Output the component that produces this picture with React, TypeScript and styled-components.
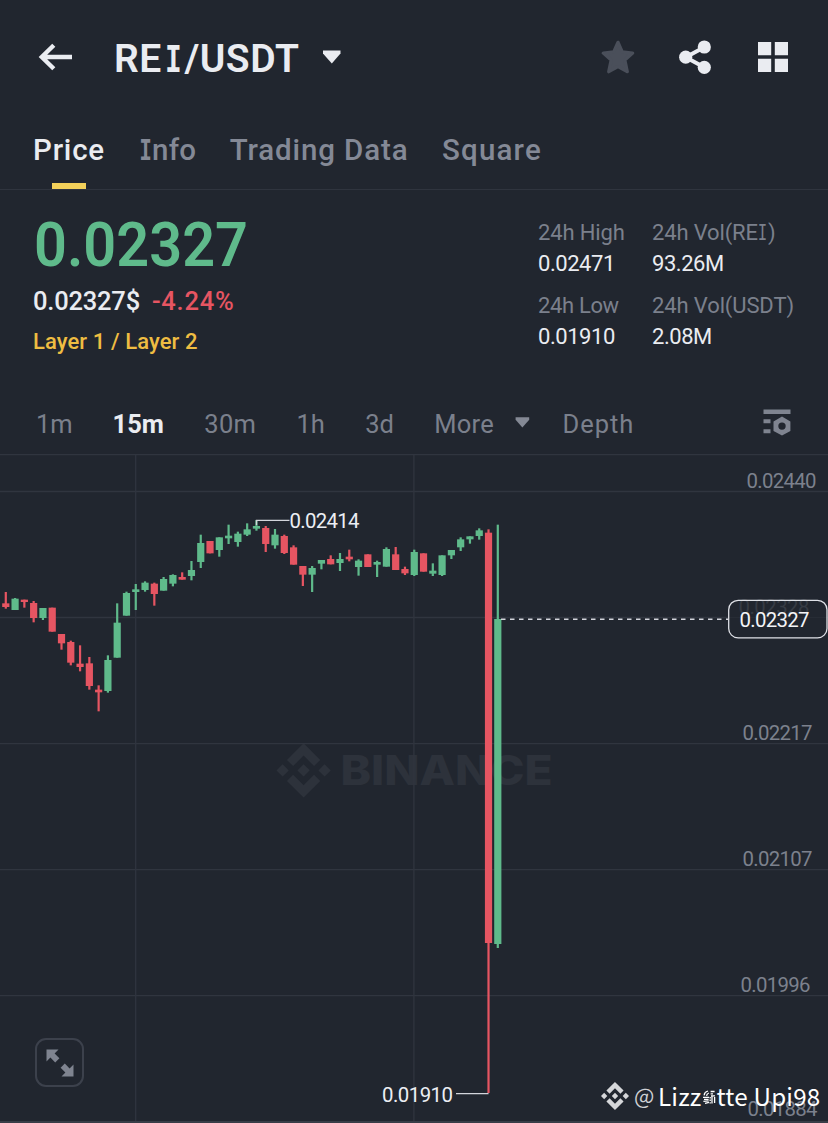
import React from 'react';
import styled, { createGlobalStyle } from 'styled-components';

const c = {
  bg: '#21262f',
  line: '#2f343e',
  text: '#eaecf1',
  muted: '#848996',
  dim: '#7b808c',
  green: '#5fba8b',
  red: '#e65562',
  yellow: '#f3d05a',
  gold: '#efbd42',
};

const GlobalStyle = createGlobalStyle`
  * { box-sizing: border-box; }
  body { margin: 0; background: ${c.bg}; }
`;

const Screen = styled.main`
  width: 828px;
  height: 1123px;
  display: flex;
  flex-direction: column;
  overflow: hidden;
  background: ${c.bg};
  color: ${c.text};
  font-family: Roboto, sans-serif;
  white-space: nowrap;
`;

const Header = styled.header`
  display: flex;
  align-items: center;
  height: 117px;
  padding: 0 40px 0 38px;
`;

const BackIcon = styled.svg`
  margin-top: -4px;
`;

const Title = styled.h1`
  margin: 0 0 0 41px;
  font-size: 39px;
  font-weight: 600;
  line-height: 46px;
  letter-spacing: 0.5px;
`;

const SlabBox = styled.span<{ $w: number }>`
  display: inline-flex;
  justify-content: center;
  width: ${(p) => p.$w}em;
  letter-spacing: 0;
`;

const SlabGlyph = styled.span<{ $weight: number }>`
  font-family: 'DejaVu Sans Mono', monospace;
  font-size: 0.965em;
  font-weight: ${(p) => p.$weight};
  line-height: 1;
  transform: scaleX(0.74);
`;

const SlabI = ({ w, weight = 700 }: { w: number; weight?: number }) => (
  <SlabBox $w={w}>
    <SlabGlyph $weight={weight}>I</SlabGlyph>
  </SlabBox>
);

const TitleCaret = styled.svg`
  margin: -4px 0 0 23px;
`;

const Actions = styled.div`
  display: flex;
  align-items: center;
  margin: -4px 0 0 auto;
`;

const ShareIcon = styled.svg`
  margin: 1px 46px 0 44px;
`;

const GridIcon = styled.svg`
  margin-top: 1px;
`;

const Tabs = styled.nav`
  display: flex;
  gap: 33.5px;
  height: 73px;
  padding: 15px 0 0 33px;
  border-bottom: 1px solid ${c.line};
`;

const Tab = styled.a<{ $active?: boolean; $ls: number }>`
  position: relative;
  height: 57px;
  font-size: 29.5px;
  font-weight: 500;
  line-height: 36px;
  letter-spacing: ${(p) => p.$ls}px;
  color: ${(p) => (p.$active ? c.text : c.muted)};
  ${(p) =>
    p.$active &&
    `&::after {
      content: '';
      position: absolute;
      left: 19px;
      bottom: 0;
      width: 33.5px;
      height: 6px;
      background: ${c.yellow};
    }`}
`;

const Summary = styled.section`
  display: flex;
  justify-content: space-between;
  height: 202px;
  padding: 25px 32px 0 33px;
`;

const LastPrice = styled.div`
  width: 230px;
  font-size: 62px;
  font-weight: 600;
  line-height: 60px;
  color: ${c.green};
  transform: translateX(1px) scaleX(0.93);
  transform-origin: 0 0;
`;

const SubPrice = styled.div`
  display: flex;
  margin-top: 9px;
  font-size: 25.5px;
  font-weight: 500;
  line-height: 34px;
  letter-spacing: -0.2px;
`;

const Change = styled.span`
  margin-left: 12px;
  letter-spacing: 0.75px;
  color: ${c.red};
`;

const Category = styled.div`
  margin-top: 10px;
  font-size: 22px;
  font-weight: 500;
  line-height: 28px;
  letter-spacing: 0.09px;
  color: ${c.gold};
`;

const Stats = styled.dl`
  display: grid;
  grid-template-columns: 114px 144px;
  grid-auto-rows: 62px;
  row-gap: 11px;
  margin: 2px 0 0;
`;

const Stat = styled.div`
  font-size: 22px;
  line-height: 31px;
`;

const StatLabel = styled.dt<{ $ls: number }>`
  color: ${c.dim};
  letter-spacing: ${(p) => p.$ls}px;
`;

const StatValue = styled.dd`
  margin: 0;
  letter-spacing: -0.45px;
`;

const Intervals = styled.nav`
  display: flex;
  align-items: center;
  gap: 40.3px;
  height: 62px;
  padding: 1px 37px 0 36px;
`;

const Interval = styled.a<{ $active?: boolean; $ls?: number; $pull?: number }>`
  display: flex;
  align-items: center;
  margin-left: ${(p) => -(p.$pull ?? 0)}px;
  font-size: 25.5px;
  font-weight: ${(p) => (p.$active ? 700 : 400)};
  line-height: 34px;
  letter-spacing: ${(p) => p.$ls ?? 0}px;
  color: ${(p) => (p.$active ? c.text : c.dim)};
`;

const MoreCaret = styled.svg`
  margin: -3px 0 0 21px;
`;

const SettingsIcon = styled.svg`
  margin: -2px 0 0 auto;
`;

const ChartArea = styled.section`
  position: relative;
  height: 669px;
`;

const ExpandButton = styled.button`
  position: absolute;
  left: 35px;
  top: 584px;
  width: 49px;
  height: 49px;
  padding: 0;
  display: grid;
  place-items: center;
  background: ${c.bg};
  border: 2px solid #3c414c;
  border-radius: 11px;
`;

const Author = styled.div`
  position: absolute;
  left: 601px;
  top: 625px;
  display: flex;
  align-items: center;
  height: 34px;
  font-family: 'Noto Sans CJK SC', sans-serif;
  font-size: 24.2px;
  line-height: 34px;
  color: #fff;
`;

const At = styled.span`
  width: 24px;
  margin: -2px 0 0 5px;
  font-size: 21.5px;
  color: #cfd0d4;
`;

const NameStart = styled.span`
  letter-spacing: 0.2px;
`;

const NameEnd = styled.span`
  letter-spacing: 0.2px;
`;

const BINANCE_PATH =
  'M16.624 13.9202l2.7175 2.7154-7.353 7.353-7.353-7.352 2.7175-2.7164 4.6355 4.6595 4.6356-4.6595zm4.6366-4.6366L24 12l-2.7154 2.7164L18.5682 12l2.6924-2.7164zm-9.272.001l2.7163 2.6914-2.7164 2.7174v-.001L9.2721 12l2.7164-2.7154zm-9.2722-.001L5.4088 12l-2.6914 2.6924L0 12l2.7164-2.7164zM11.9885.0115l7.353 7.329-2.7174 2.7154-4.6356-4.6356-4.6355 4.6595-2.7174-2.7154 7.353-7.353z';

type Candle = ['g' | 'r', number, number, number, number];

// [direction, wick top, body top, body bottom, wick bottom], in thirds of a pixel below CANDLE_TOP
const CANDLE_TOP = 500;
const candles: Candle[] = [
  ['r', 276, 310, 321, 326], ['g', 294, 296, 330, 330], ['r', 299, 299, 306, 323],
  ['r', 303, 309, 354, 367], ['g', 324, 324, 354, 360], ['r', 323, 323, 395, 395],
  ['r', 402, 402, 430, 449], ['r', 422, 426, 488, 496], ['r', 436, 491, 501, 514],
  ['r', 471, 490, 558, 569], ['r', 556, 569, 577, 634], ['g', 466, 480, 573, 578],
  ['g', 310, 368, 473, 473], ['g', 275, 279, 347, 347], ['g', 252, 268, 276, 330],
  ['g', 244, 248, 270, 275], ['r', 248, 251, 282, 317], ['g', 231, 237, 272, 272],
  ['g', 223, 225, 251, 259], ['r', 217, 231, 239, 239], ['g', 183, 210, 228, 241],
  ['g', 104, 129, 186, 204], ['r', 123, 123, 160, 160], ['g', 112, 112, 150, 170],
  ['g', 74, 107, 115, 132], ['g', 95, 101, 126, 140], ['g', 70, 88, 104, 108],
  ['g', 60, 78, 86, 92], ['r', 78, 84, 132, 156], ['g', 87, 104, 136, 146],
  ['r', 104, 108, 159, 162], ['r', 136, 142, 194, 194], ['r', 198, 198, 224, 258],
  ['g', 198, 204, 224, 276], ['g', 180, 180, 191, 208], ['r', 166, 177, 193, 193],
  ['g', 159, 177, 189, 213], ['r', 149, 170, 178, 184], ['g', 178, 182, 201, 227],
  ['r', 163, 163, 201, 201], ['g', 182, 186, 194, 231], ['g', 142, 147, 200, 200],
  ['r', 141, 163, 210, 210], ['r', 200, 207, 220, 225], ['g', 149, 156, 225, 228],
  ['r', 160, 160, 215, 215], ['g', 190, 212, 221, 228], ['g', 166, 166, 225, 228],
  ['g', 150, 150, 166, 177], ['g', 112, 118, 142, 153], ['g', 109, 109, 118, 131],
  ['g', 85, 91, 108, 119], ['r', 88, 98, 1329, 1779], ['g', 74, 357, 1332, 1344],
];

const axis: [string, number, number][] = [
  ['0.02440', 747.5, 488],
  ['0.02217', 743.5, 740],
  ['0.02107', 743.5, 866],
  ['0.01996', 741.5, 992],
  ['0.01884', 748.5, 1116],
];

const Chart = () => (
  <svg width="828" height="669" viewBox="0 454 828 669" fontFamily="Roboto, sans-serif" fontSize="20.4">
    <g fill="#2d323b">
      <path d={BINANCE_PATH} transform="translate(276.5 743.3) scale(2.26)" />
      <text
        x="340.5"
        y="785.3"
        fontSize="40.8"
        fontWeight="800"
        fontFamily="Inter, sans-serif"
        textLength="212"
        lengthAdjust="spacingAndGlyphs"
      >
        BINANCE
      </text>
    </g>
    <g stroke="#30353f" strokeWidth="1.3">
      {[454.7, 491.5, 617.5, 743.7, 869.7, 995.7].map((y) => (
        <path key={y} d={`M0 ${y}H828`} />
      ))}
      <path d="M135.7 455V1122M413.9 455V1122" />
    </g>
    <path d="M0 1122H828" stroke="#383d47" strokeWidth="2" />
    {candles.map(([dir, wickTop, top, bottom, wickBottom], i) => {
      const x = 5.8 + i * 9.283;
      const y = (v: number) => CANDLE_TOP + v / 3;
      return (
        <g key={i} fill={dir === 'g' ? c.green : c.red}>
          <rect x={x - 1.1} y={y(wickTop)} width="2.2" height={(wickBottom - wickTop) / 3} />
          <rect x={x - 3.6} y={y(top)} width="7.2" height={(bottom - top) / 3} />
        </g>
      );
    })}
    <g fill="#7c818d">
      {axis.map(([label, x, y]) => (
        <text key={label} x={x - 1} y={y} textLength="70">
          {label}
        </text>
      ))}
    </g>
    <path d="M501 619.3H728" stroke="#d3d5dc" strokeWidth="1.4" strokeDasharray="4.5 4.5" />
    <g stroke="#d3d5dc" strokeWidth="1.3" fill="none">
      <path d="M256.5 525V520.4H289.5" />
      <path d="M456 1093.7H488.5" />
    </g>
    <g fill="#eceef3">
      <text x="289.5" y="528" textLength="70">0.02414</text>
      <text x="382" y="1102" textLength="71">0.01910</text>
    </g>
    <rect x="728.7" y="600.3" width="98.3" height="37.6" rx="9.5" fill={c.bg} />
    <path d="M729 617.5H827" stroke="#272c35" />
    <text x="738.5" y="613.5" fill="#363b44" textLength="71">0.02328</text>
    <rect x="728.7" y="600.3" width="98.3" height="37.6" rx="9.5" fill="none" stroke="#dfe1e7" strokeWidth="1.3" />
    <text x="739.5" y="626.8" fill="#f3f4f7" textLength="70">0.02327</text>
  </svg>
);

export default function App() {
  return (
    <Screen>
      <GlobalStyle />
      <Header>
        <BackIcon width="35" height="30" viewBox="0 0 35 30" fill="none" stroke={c.text} strokeWidth="4.4">
          <path d="M15.8 3.2L3.8 15L15.8 26.8M3.8 15H34" />
        </BackIcon>
        <Title>
          RE
          <SlabI w={0.58} />
          /USDT
        </Title>
        <TitleCaret width="20" height="14" viewBox="0 0 20 14" fill={c.text}>
          <path d="M1 0.5H18.5V3.6L9.8 13.4L1 3.6Z" />
        </TitleCaret>
        <Actions>
          <svg width="34" height="34" viewBox="0 0 34 34" fill="#4a4f5a" stroke="#4a4f5a" strokeWidth="3.4" strokeLinejoin="round">
            <path d="M17 2.4L21.2 12L31.6 13.1L23.8 20.1L26.2 31.6L17 26.6L7.8 31.6L10.2 20.1L2.4 13.1L12.8 12Z" />
          </svg>
          <ShareIcon width="33" height="34" viewBox="0 0 33 34" fill={c.text}>
            <path d="M6.7 17.2L25.2 7.2M6.7 17.2L25.2 27.2" stroke={c.text} strokeWidth="4" />
            <circle cx="6.7" cy="17.2" r="6.6" />
            <circle cx="25.3" cy="7" r="6.6" />
            <circle cx="25.3" cy="27.3" r="6.6" />
          </ShareIcon>
          <GridIcon width="30" height="30" viewBox="0 0 30 30" fill={c.text}>
            <path d="M0 0H13.2V13.2H0ZM16.8 0H30V13.2H16.8ZM0 16.8H13.2V30H0ZM16.8 16.8H30V30H16.8Z" />
          </GridIcon>
        </Actions>
      </Header>

      <Tabs>
        <Tab $active $ls={0.8}>Price</Tab>
        <Tab $ls={0.2}>
          <SlabI w={0.46} />
          nfo
        </Tab>
        <Tab $ls={0.87}>Trading Data</Tab>
        <Tab $ls={1.2}>Square</Tab>
      </Tabs>

      <Summary>
        <div>
          <LastPrice>0.02327</LastPrice>
          <SubPrice>
            0.02327$<Change>-4.24%</Change>
          </SubPrice>
          <Category>Layer 1 / Layer 2</Category>
        </div>
        <Stats>
          <Stat>
            <StatLabel $ls={-0.15}>24h High</StatLabel>
            <StatValue>0.02471</StatValue>
          </Stat>
          <Stat>
            <StatLabel $ls={-0.15}>
              24h Vol(RE
              <SlabI w={0.46} weight={400} />)
            </StatLabel>
            <StatValue>93.26M</StatValue>
          </Stat>
          <Stat>
            <StatLabel $ls={-0.35}>24h Low</StatLabel>
            <StatValue>0.01910</StatValue>
          </Stat>
          <Stat>
            <StatLabel $ls={-0.12}>24h Vol(USDT)</StatLabel>
            <StatValue>2.08M</StatValue>
          </Stat>
        </Stats>
      </Summary>

      <Intervals>
        <Interval $ls={-0.2}>1m</Interval>
        <Interval $active>15m</Interval>
        <Interval $ls={0.3}>30m</Interval>
        <Interval>1h</Interval>
        <Interval>3d</Interval>
        <Interval $ls={0.3}>
          More
          <MoreCaret width="15" height="11" viewBox="0 0 15 11" fill="#848995">
            <path d="M0.6 0.2H14.2V2.8L7.4 10.6L0.6 2.8Z" />
          </MoreCaret>
        </Interval>
        <Interval $ls={1} $pull={8}>Depth</Interval>
        <SettingsIcon width="28" height="27" viewBox="0 0 28 27" fill="#7f8490">
          <path d="M0.5 0.5H27.5V5H0.5ZM0.5 10.3H7.5V14.3H0.5ZM0.5 20.2H7.5V24.2H0.5Z" />
          <path fillRule="evenodd" d="M19 7.6L27.4 12.4V22.1L19 26.6L10.5 22.1V12.4ZM19 13.4A3.7 3.7 0 1 0 19 20.8A3.7 3.7 0 1 0 19 13.4Z" />
        </SettingsIcon>
      </Intervals>

      <ChartArea>
        <Chart />
        <ExpandButton>
          <svg width="28" height="28" viewBox="0 0 28 28" fill="#7f8490">
            <path d="M0.5 0.5H12.5L8.6 4.4L13.4 9.2L9.2 13.4L4.4 8.6L0.5 12.5Z" />
            <path d="M27.5 27.5H15.5L19.4 23.6L14.6 18.8L18.8 14.6L23.6 19.4L27.5 15.5Z" />
          </svg>
        </ExpandButton>
        <Author>
          <svg width="28" height="28" viewBox="0 0 24 24" fill="#d6d7da">
            <path d={BINANCE_PATH} />
          </svg>
          <At>@</At>
          <NameStart>Lizz</NameStart>
          <svg width="15" height="16" viewBox="0 0 15 16" fill="none" stroke="#fff" strokeWidth="1.3">
            <path d="M6 3C3 4 2 5.6 2.4 7.4M7 5C5 5.6 4.6 6.6 4.8 7.8M1 9.4H7M2 11.4H6.6M1.4 13.4L6.6 12.8M3 15.4L7 14.4M8.6 3.5H12.6M8.6 5.8H11M9 7.8H13M10 8V15.6M12.6 9V15" />
            <path d="M8.2 9V15.6" strokeDasharray="1.4 1.2" />
          </svg>
          <NameEnd>tte Upi98</NameEnd>
        </Author>
      </ChartArea>
    </Screen>
  );
}
